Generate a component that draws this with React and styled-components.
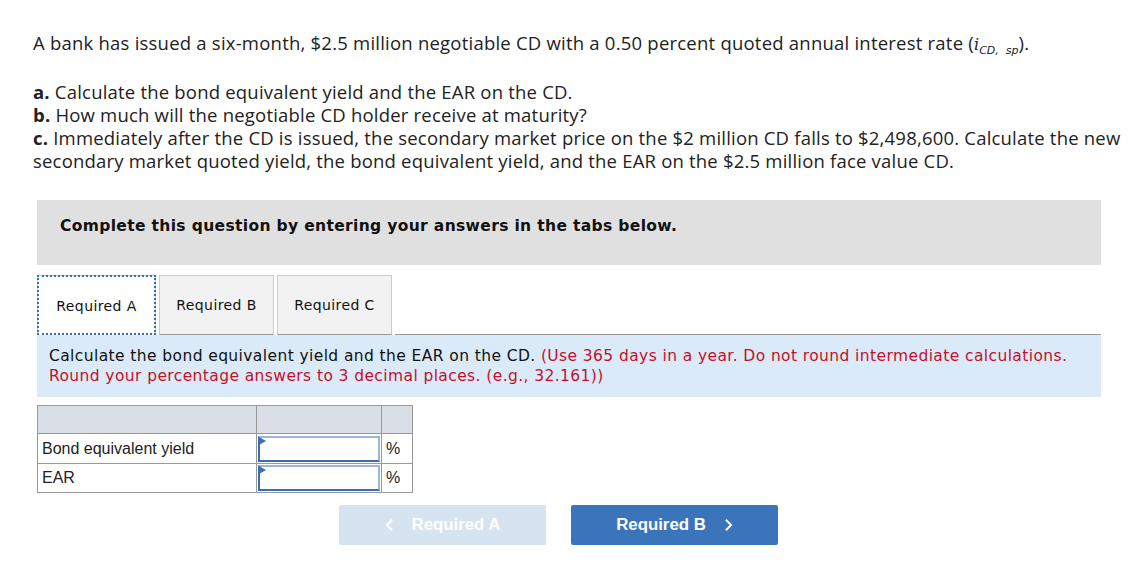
import styled, { createGlobalStyle } from "styled-components";

const Global = createGlobalStyle`
  body {
    margin: 0;
    background: #fff;
    font-family: "Open Sans", Lato, sans-serif;
    color: #222;
  }
`;

function App() {
  return (
    <Page>
      <Global />
      <Intro>
        A bank has issued a six-month, $2.5 million negotiable CD with a 0.50 percent quoted
        annual interest rate (<Var>i<sub>CD,&nbsp; sp</sub></Var>).
      </Intro>
      <Parts>
        <div>
          <b>a.</b> Calculate the bond equivalent yield and the EAR on the CD.
        </div>
        <div>
          <b>b.</b> How much will the negotiable CD holder receive at maturity?
        </div>
        <div>
          <b>c.</b> Immediately after the CD is issued, the secondary market price on the $2
          million CD falls to $2,498,600. Calculate the new secondary market quoted yield, the
          bond equivalent yield, and the EAR on the $2.5 million face value CD.
        </div>
      </Parts>

      <Panel>
        <Banner>Complete this question by entering your answers in the tabs below.</Banner>
        <Tabs>
          <Tab $active>Required A</Tab>
          <Tab>Required B</Tab>
          <Tab>Required C</Tab>
          <TabFill />
        </Tabs>
        <Instruction>
          Calculate the bond equivalent yield and the EAR on the CD.{" "}
          <Red>
            (Use 365 days in a year. Do not round intermediate calculations. Round your
            percentage answers to 3 decimal places. (e.g., 32.161))
          </Red>
        </Instruction>

        <Table>
          <tbody>
            <HeadRow>
              <Cell $w={219} />
              <Cell $w={125} />
              <Cell $w={31} />
            </HeadRow>
            <Row $h={30}>
              <Cell>Bond equivalent yield</Cell>
              <InputCell>
                <Field />
              </InputCell>
              <Cell>%</Cell>
            </Row>
            <Row $h={29}>
              <Cell>EAR</Cell>
              <InputCell>
                <Field />
              </InputCell>
              <Cell>%</Cell>
            </Row>
          </tbody>
        </Table>

        <Nav>
          <NavButton $disabled>
            <Chevron viewBox="0 0 10 16">
              <path d="M8 2 L2 8 L8 14" />
            </Chevron>
            Required A
          </NavButton>
          <NavButton>
            Required B
            <Chevron viewBox="0 0 10 16">
              <path d="M2 2 L8 8 L2 14" />
            </Chevron>
          </NavButton>
        </Nav>
      </Panel>
    </Page>
  );
}

export default App;

const Page = styled.div`
  padding: 31px 8px 0 33px;
  width: 1139px;
  box-sizing: border-box;
`;

const Intro = styled.p`
  margin: 0;
  font-size: 18.5px;
  letter-spacing: 0.22px;
  line-height: 23px;
`;

const Var = styled.span`
  font-family: "DejaVu Serif", serif;
  font-style: italic;
  font-size: 16px;
  letter-spacing: 0;
  sub {
    font-size: 11px;
    font-family: "DejaVu Sans", sans-serif;
  }
`;

const Parts = styled.div`
  margin-top: 18px;
  font-size: 18.5px;
  letter-spacing: 0.2px;
  line-height: 23px;
  b {
    font-weight: 700;
  }
`;

const Panel = styled.div`
  margin: 28px 0 0 4px;
  width: 1064px;
`;

const Banner = styled.div`
  background: #e0e0e0;
  height: 65px;
  box-sizing: border-box;
  padding: 17px 23px;
  font-family: "DejaVu Sans", sans-serif;
  font-weight: 700;
  font-size: 15.5px;
  letter-spacing: 0.35px;
  color: #111;
`;

const Tabs = styled.div`
  display: flex;
  margin-top: 10px;
  height: 60px;
`;

const Tab = styled.div`
  width: ${(p) => (p.$active ? "119px" : "115px")};
  margin-right: 3px;
  box-sizing: border-box;
  display: flex;
  align-items: center;
  justify-content: center;
  font-family: "DejaVu Sans", sans-serif;
  font-size: 14px;
  letter-spacing: 0.4px;
  color: #111;
  background: ${(p) => (p.$active ? "#fff" : "#f2f2f2")};
  border: 1px solid #ccc;
  border-bottom: ${(p) => (p.$active ? "none" : "1px solid #999")};
  outline: ${(p) => (p.$active ? "2px dotted #3b6db0" : "none")};
  outline-offset: -2px;
`;

const TabFill = styled.div`
  flex: 1;
  border-bottom: 1px solid #999;
`;

const Instruction = styled.div`
  background: #dbeaf8;
  padding: 11px 12px 11px 12px;
  font-family: "DejaVu Sans", sans-serif;
  font-size: 15.5px;
  letter-spacing: 0.4px;
  line-height: 20px;
  color: #111;
`;

const Red = styled.span`
  color: #c4102a;
`;

const Table = styled.table`
  margin-top: 8px;
  border-collapse: collapse;
  font-family: "Liberation Sans", Arial, sans-serif;
  font-size: 16px;
  color: #222;
`;

const HeadRow = styled.tr`
  background: #d9dde6;
  height: 28px;
`;

const Row = styled.tr`
  height: ${(p) => p.$h}px;
`;

const Cell = styled.td`
  border: 1px solid #999;
  width: ${(p) => (p.$w ? `${p.$w}px` : "auto")};
  padding: 0 4px;
  box-sizing: border-box;
  line-height: 18px;
`;

const InputCell = styled.td`
  border: 1px solid #999;
  padding: 1px;
`;

const Field = styled.div`
  position: relative;
  height: 26px;
  border: 2px solid #3b6db0;
  border-color: #9ab6dc #9ab6dc #3b6db0 #3b6db0;
  box-sizing: border-box;
  background: #fff;
  &::before {
    content: "";
    position: absolute;
    left: -1px;
    top: -1px;
    border-left: 7px solid #3b6db0;
    border-top: 4px solid transparent;
    border-bottom: 4px solid transparent;
  }
`;

const Nav = styled.div`
  display: flex;
  gap: 25px;
  margin: 12px 0 0 302px;
`;

const NavButton = styled.div`
  width: 207px;
  height: 40px;
  border-radius: 2px;
  display: flex;
  align-items: center;
  justify-content: center;
  gap: 18px;
  font-family: "Liberation Sans", Arial, sans-serif;
  font-weight: 700;
  font-size: 16.8px;
  color: #fff;
  background: ${(p) => (p.$disabled ? "#d6e3f1" : "#3a75bb")};
`;

const Chevron = styled.svg`
  width: 9px;
  height: 14px;
  fill: none;
  stroke: #fff;
  stroke-width: 2.2;
`;
